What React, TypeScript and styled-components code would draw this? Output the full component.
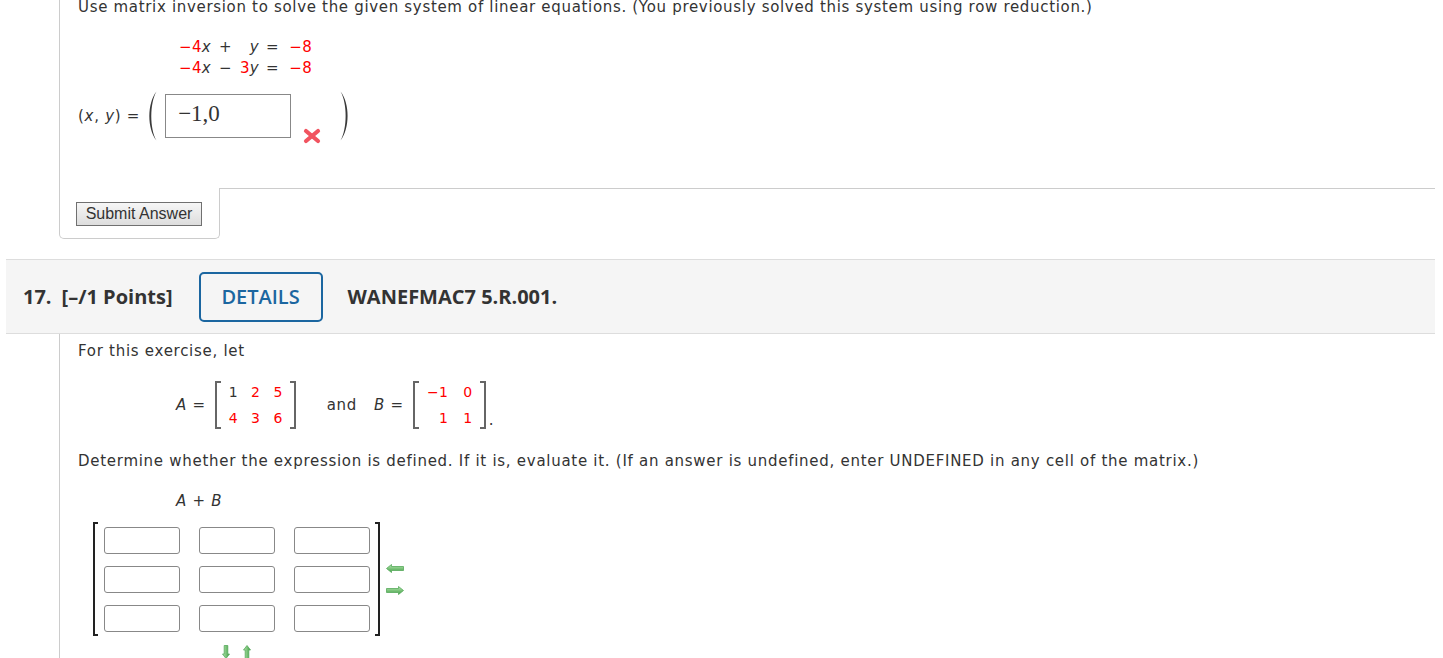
import styled, { createGlobalStyle } from 'styled-components'

const RED = '#ff0000'

const GlobalStyle = createGlobalStyle`
  body {
    margin: 0;
    background: #fff;
    color: #333;
    font-family: "DejaVu Sans", Verdana, sans-serif;
    letter-spacing: 0.72px;
    overflow: hidden;
  }
`

// Arrow icons used by the matrix tool //
function ArrowH({ dir }: { dir: 'left' | 'right' }) {
  const id = `ah-${dir}`
  return (
    <svg width="18" height="9" viewBox="0 0 18 9" style={{ transform: dir === 'right' ? 'scaleX(-1)' : undefined }}>
      <defs>
        <linearGradient id={id} x1="0" y1="0" x2="0" y2="1">
          <stop offset="0" stopColor="#b6e3b0" />
          <stop offset="0.5" stopColor="#7cc47a" />
          <stop offset="1" stopColor="#3f9a45" />
        </linearGradient>
      </defs>
      <polygon
        points="0.5,4.5 5.5,0.5 5.5,2.5 17.5,2.5 17.5,6.5 5.5,6.5 5.5,8.5"
        fill={`url(#${id})`}
        stroke="#55a95a"
        strokeWidth="0.8"
      />
    </svg>
  )
}

function ArrowV({ dir }: { dir: 'up' | 'down' }) {
  const id = `av-${dir}`
  return (
    <svg width="8" height="14" viewBox="0 0 8 14" style={{ transform: dir === 'down' ? 'scaleY(-1)' : undefined }}>
      <defs>
        <linearGradient id={id} x1="0" y1="0" x2="1" y2="0">
          <stop offset="0" stopColor="#b6e3b0" />
          <stop offset="0.5" stopColor="#7cc47a" />
          <stop offset="1" stopColor="#3f9a45" />
        </linearGradient>
      </defs>
      <polygon
        points="4,0.5 7.5,5 5.8,5 5.8,13.5 2.2,13.5 2.2,5 0.5,5"
        fill={`url(#${id})`}
        stroke="#55a95a"
        strokeWidth="0.8"
      />
    </svg>
  )
}

function Paren({ right }: { right?: boolean }) {
  return (
    <ParenSvg viewBox="0 0 12 50" $right={right}>
      <path d="M10.5,0.5 C1,12 1,38 10.5,49.5 C3.6,38 3.6,12 10.5,0.5 Z" fill="#3a3a3a" />
    </ParenSvg>
  )
}

function Cross() {
  return (
    <CrossSvg viewBox="0 0 18 16">
      <g stroke="#f0424f" strokeWidth="4.2" strokeLinecap="round" opacity="0.9">
        <line x1="3" y1="3" x2="15" y2="13" />
        <line x1="15" y1="3" x2="3" y2="13" />
      </g>
    </CrossSvg>
  )
}

const eqRows = [
  [{ t: '−4', v: 'x' }, { t: '+' }, { v: 'y' }, { t: '=' }, { t: '−8' }],
  [{ t: '−4', v: 'x' }, { t: '−' }, { t: '3', v: 'y' }, { t: '=' }, { t: '−8' }],
]

const colAlign = ['end', 'center', 'end', 'center', 'end']

export default function App() {
  return (
    <Page>
      <GlobalStyle />

      <TopCard>
        <QuestionBody>
          <Prompt>
            Use matrix inversion to solve the given system of linear equations. (You previously solved this system
            using row reduction.)
          </Prompt>

          <EquationGrid>
            {eqRows.map((row, r) =>
              row.map((c, i) => (
                <EqCell key={`${r}-${i}`} $align={colAlign[i]}>
                  {c.t && <Coef $red={i !== 1 && i !== 3}>{c.t}</Coef>}
                  {c.v && <Var>{c.v}</Var>}
                </EqCell>
              )),
            )}
          </EquationGrid>

          <AnswerRow>
            <AnswerLabel>
              (<Var>x</Var>, <Var>y</Var>) =
            </AnswerLabel>
            <Paren />
            <AnswerInput readOnly value="−1,0" />
            <Cross />
            <Paren right />
          </AnswerRow>
        </QuestionBody>

        <Footer>
          <SubmitBox>
            <SubmitButton>Submit Answer</SubmitButton>
          </SubmitBox>
          <FooterRule />
        </Footer>
      </TopCard>

      <Header>
        <QNum>17.</QNum>
        <span>[–/1 Points]</span>
        <DetailsButton>DETAILS</DetailsButton>
        <Ref>WANEFMAC7 5.R.001.</Ref>
      </Header>

      <BodyCard>
        <Line>For this exercise, let</Line>

        <Defs>
          <Name>
            <Var>A</Var> =
          </Name>
          <Bracketed $color="#666" $tick={6}>
            <MatGrid $cols={3} $gap={13}>
              <span>1</span>
              <Red>2</Red>
              <Red>5</Red>
              <Red>4</Red>
              <Red>3</Red>
              <Red>6</Red>
            </MatGrid>
          </Bracketed>
          <And>and</And>
          <Name>
            <Var>B</Var> =
          </Name>
          <Bracketed $color="#666" $tick={6}>
            <MatGrid $cols={2} $gap={15}>
              <Red>−1</Red>
              <Red>0</Red>
              <Red>1</Red>
              <Red>1</Red>
            </MatGrid>
          </Bracketed>
          <Dot>.</Dot>
        </Defs>

        <Line $top={23}>
          Determine whether the expression is defined. If it is, evaluate it. (If an answer is undefined, enter
          UNDEFINED in any cell of the matrix.)
        </Line>

        <ExprLabel>
          <Var>A</Var> + <Var>B</Var>
        </ExprLabel>

        <MatrixTool>
          <MatrixRow>
            <Bracketed $color="#222" $tick={5}>
              <InputGrid>
                {Array.from({ length: 9 }).map((_, i) => (
                  <CellInput key={i} />
                ))}
              </InputGrid>
            </Bracketed>
            <SideArrows>
              <ArrowH dir="left" />
              <ArrowH dir="right" />
            </SideArrows>
          </MatrixRow>
          <BottomArrows>
            <ArrowV dir="down" />
            <ArrowV dir="up" />
          </BottomArrows>
        </MatrixTool>
      </BodyCard>
    </Page>
  )
}

const Page = styled.div`
  padding-left: 6px;
  width: 1429px;
`

const TopCard = styled.div`
  margin-left: 53px;
  display: flex;
  flex-direction: column;
`

const QuestionBody = styled.div`
  display: flex;
  flex-direction: column;
  border-left: 1px solid #ccc;
  padding: 0 0 47px 18px;
`

const Prompt = styled.p`
  margin: -2px 0 0;
  font-size: 15px;
  line-height: 18px;
  letter-spacing: 0.68px;
`

const EquationGrid = styled.div`
  display: grid;
  grid-template-columns: 34px 13px 19px 11px 26px;
  column-gap: 8px;
  width: max-content;
  margin: 21px 0 0 99px;
  font-size: 15px;
  line-height: 21px;
  letter-spacing: 0.3px;
`

const EqCell = styled.span<{ $align: string }>`
  justify-self: ${(p) => p.$align};
  white-space: nowrap;
`

const Coef = styled.span<{ $red?: boolean }>`
  color: ${(p) => (p.$red ? RED : '#333')};
`

const Var = styled.i`
  font-style: italic;
`

const Red = styled.span`
  color: ${RED};
`

const AnswerRow = styled.div`
  display: flex;
  align-items: center;
  height: 50px;
  margin-top: 12px;
`

const AnswerLabel = styled.span`
  font-size: 15px;
  white-space: nowrap;
`

const ParenSvg = styled.svg<{ $right?: boolean }>`
  width: 12px;
  height: 50px;
  margin-left: ${(p) => (p.$right ? '18px' : '6px')};
  transform: ${(p) => (p.$right ? 'scaleX(-1)' : 'none')};
`

const AnswerInput = styled.input`
  box-sizing: border-box;
  width: 126px;
  height: 44px;
  margin-left: 7px;
  padding: 0 0 4px 12px;
  border: 1px solid #888;
  font-family: "Liberation Serif", "Times New Roman", serif;
  font-size: 23px;
  letter-spacing: normal;
  color: #333;
  outline: none;
`

const CrossSvg = styled.svg`
  width: 18px;
  height: 16px;
  align-self: flex-end;
  margin: 0 0 -3px 12px;
`

const Footer = styled.div`
  display: flex;
  height: 51px;
`

const SubmitBox = styled.div`
  box-sizing: border-box;
  width: 161px;
  border: 1px solid #ccc;
  border-top: none;
  border-radius: 0 0 5px 5px;
  padding: 14px 0 0 16px;
`

const FooterRule = styled.div`
  flex: 1;
  border-top: 1px solid #ccc;
`

const SubmitButton = styled.button`
  box-sizing: border-box;
  width: 126px;
  height: 24px;
  padding: 0;
  border: 1px solid #707070;
  background: linear-gradient(#f6f6f6, #dddddd);
  font-family: "Liberation Sans", Arial, sans-serif;
  font-size: 16px;
  letter-spacing: normal;
  color: #333;
`

const Header = styled.div`
  box-sizing: border-box;
  display: flex;
  align-items: center;
  height: 75px;
  margin-top: 20px;
  padding-left: 17px;
  background: #f5f5f5;
  border-top: 1px solid #ddd;
  border-bottom: 1px solid #ddd;
  font-family: "Open Sans", sans-serif;
  font-weight: 700;
  font-size: 20px;
  letter-spacing: normal;
  color: #333;
`

const QNum = styled.span`
  margin-right: 10px;
`

const DetailsButton = styled.button`
  box-sizing: border-box;
  width: 124px;
  height: 50px;
  margin-left: 26px;
  border: 2px solid #1b66a0;
  border-radius: 5px;
  background: transparent;
  color: #1b66a0;
  font-family: "Open Sans", sans-serif;
  font-weight: 600;
  font-size: 20px;
  letter-spacing: normal;
`

const Ref = styled.span`
  margin-left: 25px;
`

const BodyCard = styled.div`
  display: flex;
  flex-direction: column;
  margin-left: 53px;
  border-left: 1px solid #ccc;
  padding: 8px 0 40px 18px;
`

const Line = styled.p<{ $top?: number }>`
  margin: ${(p) => p.$top ?? 0}px 0 0;
  font-size: 15px;
  line-height: 18px;
`

const Defs = styled.div`
  display: flex;
  align-items: center;
  margin: 21px 0 0 98px;
  font-size: 15px;
`

const Name = styled.span`
  margin-right: 9px;
  white-space: nowrap;
`

const And = styled.span`
  margin: 0 17px 0 31px;
`

const Dot = styled.span`
  align-self: flex-end;
  margin-left: 3px;
`

const Bracketed = styled.div<{ $color: string; $tick: number }>`
  display: flex;
  align-items: stretch;

  &::before,
  &::after {
    content: '';
    box-sizing: border-box;
    width: ${(p) => p.$tick}px;
    border: 2px solid ${(p) => p.$color};
  }
  &::before {
    border-right: none;
  }
  &::after {
    border-left: none;
  }
`

const MatGrid = styled.div<{ $cols: number; $gap: number }>`
  display: grid;
  grid-template-columns: repeat(${(p) => p.$cols}, auto);
  column-gap: ${(p) => p.$gap}px;
  row-gap: 8px;
  justify-items: end;
  padding: 2px 7px 2px 8px;
  font-size: 14px;
  line-height: 18px;
  letter-spacing: 0.4px;
`

const ExprLabel = styled.span`
  margin: 22px 0 0 98px;
  font-size: 15px;
  line-height: 18px;
`

const MatrixTool = styled.div`
  display: flex;
  flex-direction: column;
  align-items: flex-start;
  margin: 12px 0 0 15px;
`

const MatrixRow = styled.div`
  display: flex;
  align-items: center;
`

const InputGrid = styled.div`
  display: grid;
  grid-template-columns: repeat(3, 76px);
  column-gap: 19px;
  row-gap: 12px;
  padding: 5px 5px 4px 6px;
`

const CellInput = styled.input`
  box-sizing: border-box;
  width: 76px;
  height: 27px;
  border: 1px solid #888;
  border-radius: 3px;
  outline: none;
`

const SideArrows = styled.div`
  display: flex;
  flex-direction: column;
  gap: 13px;
  margin-left: 6px;
`

const BottomArrows = styled.div`
  display: flex;
  justify-content: center;
  gap: 13px;
  width: 287px;
  margin-top: 9px;
`
